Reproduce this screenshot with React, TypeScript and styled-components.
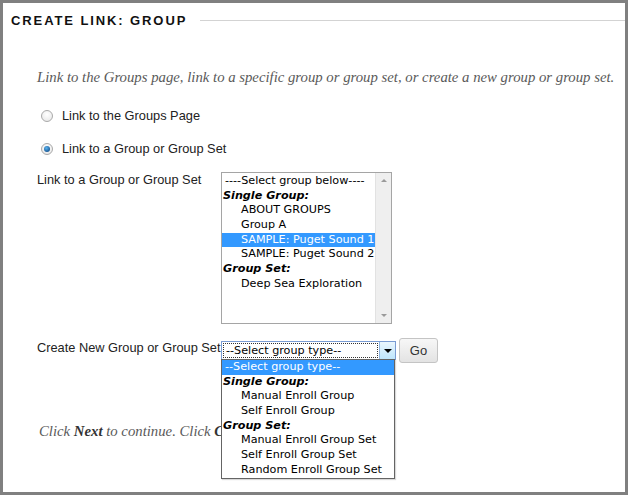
import styled, { createGlobalStyle } from "styled-components";

const GlobalStyle = createGlobalStyle`
  html, body {
    margin: 0;
    padding: 0;
    background: #ffffff;
  }
`;

type Item = { label: string; group?: boolean; selected?: boolean; plain?: boolean };

const listItems: Item[] = [
  { label: "----Select group below----", plain: true },
  { label: "Single Group:", group: true },
  { label: "ABOUT GROUPS" },
  { label: "Group A" },
  { label: "SAMPLE: Puget Sound 1", selected: true },
  { label: "SAMPLE: Puget Sound 2" },
  { label: "Group Set:", group: true },
  { label: "Deep Sea Exploration" },
];

const typeItems: Item[] = [
  { label: "--Select group type--", selected: true, plain: true },
  { label: "Single Group:", group: true },
  { label: "Manual Enroll Group" },
  { label: "Self Enroll Group" },
  { label: "Group Set:", group: true },
  { label: "Manual Enroll Group Set" },
  { label: "Self Enroll Group Set" },
  { label: "Random Enroll Group Set" },
];

const Frame = styled.div`
  box-sizing: border-box;
  width: 628px;
  height: 495px;
  border: 3px solid #808080;
  background: #ffffff;
  font-family: "Liberation Sans", Arial, sans-serif;
  color: #222222;
  position: relative;
`;

const HeaderRow = styled.div`
  display: flex;
  align-items: center;
  padding: 9px 0 0 8px;
  height: 17px;
`;

const Title = styled.h1`
  margin: 0;
  font-size: 13px;
  font-weight: bold;
  letter-spacing: 1.9px;
  color: #111111;
  white-space: nowrap;
`;

const Rule = styled.div`
  flex: 1;
  height: 1px;
  margin-left: 13px;
  background: #d3d3d3;
`;

const Content = styled.div`
  padding-left: 34px;
`;

const Instructions = styled.p`
  margin: 40px 0 0 0;
  font-family: "Liberation Serif", Georgia, serif;
  font-style: italic;
  font-size: 14.75px;
  color: #5a5a5a;
  line-height: 17px;
  white-space: nowrap;
`;

const RadioRow = styled.label<{ $first?: boolean }>`
  display: flex;
  align-items: center;
  gap: 9px;
  margin: ${({ $first }) => ($first ? "22px" : "17px")} 0 0 4px;
  font-size: 12.8px;
  line-height: 16px;
  color: #222222;
`;

const RadioDot = styled.span<{ $checked?: boolean }>`
  box-sizing: border-box;
  width: 12px;
  height: 12px;
  border-radius: 50%;
  border: 1px solid #a9a9a9;
  background: radial-gradient(circle at 50% 35%, #ffffff 0%, #e4e4e4 100%);
  display: flex;
  align-items: center;
  justify-content: center;

  &::after {
    content: "";
    display: ${({ $checked }) => ($checked ? "block" : "none")};
    width: 6px;
    height: 6px;
    border-radius: 50%;
    background: radial-gradient(circle at 40% 35%, #5ab4f0 0%, #1c5d9a 70%, #123f6e 100%);
  }
`;

const FieldRow = styled.div<{ $top: number }>`
  display: flex;
  align-items: flex-start;
  margin-top: ${({ $top }) => $top}px;
  position: relative;
`;

const FieldLabel = styled.div<{ $pad?: number }>`
  width: 184px;
  padding-top: ${({ $pad }) => $pad ?? 0}px;
  font-size: 12.8px;
  line-height: 16px;
  color: #222222;
  white-space: nowrap;
`;

const ListBox = styled.div`
  box-sizing: border-box;
  width: 171px;
  height: 152px;
  border: 1px solid #a5a5a5;
  display: flex;
  background: #ffffff;
`;

const ListItems = styled.div`
  flex: 1;
  padding-top: 1px;
`;

const Option = styled.div<{ $group?: boolean; $selected?: boolean; $plain?: boolean }>`
  font-family: "DejaVu Sans", Tahoma, sans-serif;
  font-size: 11.2px;
  line-height: 14.7px;
  height: 14.7px;
  white-space: nowrap;
  overflow: hidden;
  padding-left: ${({ $group, $plain }) => ($group ? "1px" : $plain ? "3px" : "19px")};
  font-weight: ${({ $group }) => ($group ? "bold" : "normal")};
  font-style: ${({ $group }) => ($group ? "italic" : "normal")};
  color: ${({ $selected }) => ($selected ? "#ffffff" : "#000000")};
  background: ${({ $selected }) => ($selected ? "#3399ff" : "transparent")};
`;

const ScrollTrack = styled.div`
  width: 16px;
  background: #efefef;
  border-left: 1px solid #e2e2e2;
  display: flex;
  flex-direction: column;
  justify-content: space-between;
  align-items: center;
  padding: 6px 0;
  box-sizing: border-box;
`;

const Arrow = styled.span<{ $down?: boolean }>`
  width: 0;
  height: 0;
  border-left: 3px solid transparent;
  border-right: 3px solid transparent;
  ${({ $down }) =>
    $down ? "border-top: 3px solid #9a9a9a;" : "border-bottom: 3px solid #9a9a9a;"}
`;

const ComboWrap = styled.div`
  position: relative;
  display: flex;
  align-items: flex-start;
  gap: 3px;
`;

const Combo = styled.div`
  box-sizing: border-box;
  width: 175px;
  height: 19px;
  border: 1px solid #7a9cd3;
  display: flex;
  align-items: stretch;
  background: #ffffff;
  margin-top: 3px;
`;

const ComboText = styled.div`
  flex: 1;
  margin: 1px;
  border: 1px dotted #333333;
  font-family: "DejaVu Sans", Tahoma, sans-serif;
  font-size: 11.2px;
  line-height: 13px;
  padding-left: 2px;
  color: #000000;
  white-space: nowrap;
  overflow: hidden;
`;

const ComboButton = styled.div`
  width: 15px;
  border-left: 1px solid #8fb4e0;
  background: linear-gradient(#eaf6fd, #bee6fd);
  display: flex;
  align-items: center;
  justify-content: center;

  &::after {
    content: "";
    border-left: 4px solid transparent;
    border-right: 4px solid transparent;
    border-top: 4px solid #000000;
  }
`;

const GoButton = styled.button`
  box-sizing: border-box;
  width: 39px;
  height: 25px;
  border: 1px solid #c4c4c4;
  border-radius: 3px;
  background: linear-gradient(#f7f7f7, #e3e3e3);
  font-family: "Liberation Sans", Arial, sans-serif;
  font-size: 13px;
  color: #333333;
  padding: 0;
`;

const Dropdown = styled.div`
  position: absolute;
  left: 0;
  top: 21px;
  box-sizing: border-box;
  width: 174px;
  border: 1px solid #646464;
  background: #ffffff;
  z-index: 2;
  box-shadow: 1px 1px 1px rgba(0, 0, 0, 0.15);
`;

const Footer = styled.p`
  margin: 60px 0 0 2px;
  font-family: "Liberation Serif", Georgia, serif;
  font-style: italic;
  font-size: 14.75px;
  color: #5a5a5a;
  line-height: 17px;
  white-space: nowrap;

  b {
    color: #333333;
  }
`;

const App = () => {
  return (
    <>
      <GlobalStyle />
      <Frame>
        <HeaderRow>
          <Title>CREATE LINK: GROUP</Title>
          <Rule />
        </HeaderRow>
        <Content>
          <Instructions>
            Link to the Groups page, link to a specific group or group set, or
            create a new group or group set.
          </Instructions>
          <RadioRow $first>
            <RadioDot />
            Link to the Groups Page
          </RadioRow>
          <RadioRow>
            <RadioDot $checked />
            Link to a Group or Group Set
          </RadioRow>
          <FieldRow $top={15}>
            <FieldLabel>Link to a Group or Group Set</FieldLabel>
            <ListBox>
              <ListItems>
                {listItems.map((item) => (
                  <Option
                    key={item.label}
                    $group={item.group}
                    $selected={item.selected}
                    $plain={item.plain}
                  >
                    {item.label}
                  </Option>
                ))}
              </ListItems>
              <ScrollTrack>
                <Arrow />
                <Arrow $down />
              </ScrollTrack>
            </ListBox>
          </FieldRow>
          <FieldRow $top={14}>
            <FieldLabel $pad={2}>Create New Group or Group Set</FieldLabel>
            <ComboWrap>
              <Combo>
                <ComboText>--Select group type--</ComboText>
                <ComboButton />
              </Combo>
              <GoButton>Go</GoButton>
              <Dropdown>
                {typeItems.map((item) => (
                  <Option
                    key={item.label}
                    $group={item.group}
                    $selected={item.selected}
                    $plain={item.plain}
                  >
                    {item.label}
                  </Option>
                ))}
              </Dropdown>
            </ComboWrap>
          </FieldRow>
          <Footer>
            Click <b>Next</b> to continue. Click <b>Cancel</b> to quit.
          </Footer>
        </Content>
      </Frame>
    </>
  );
};

export default App;
